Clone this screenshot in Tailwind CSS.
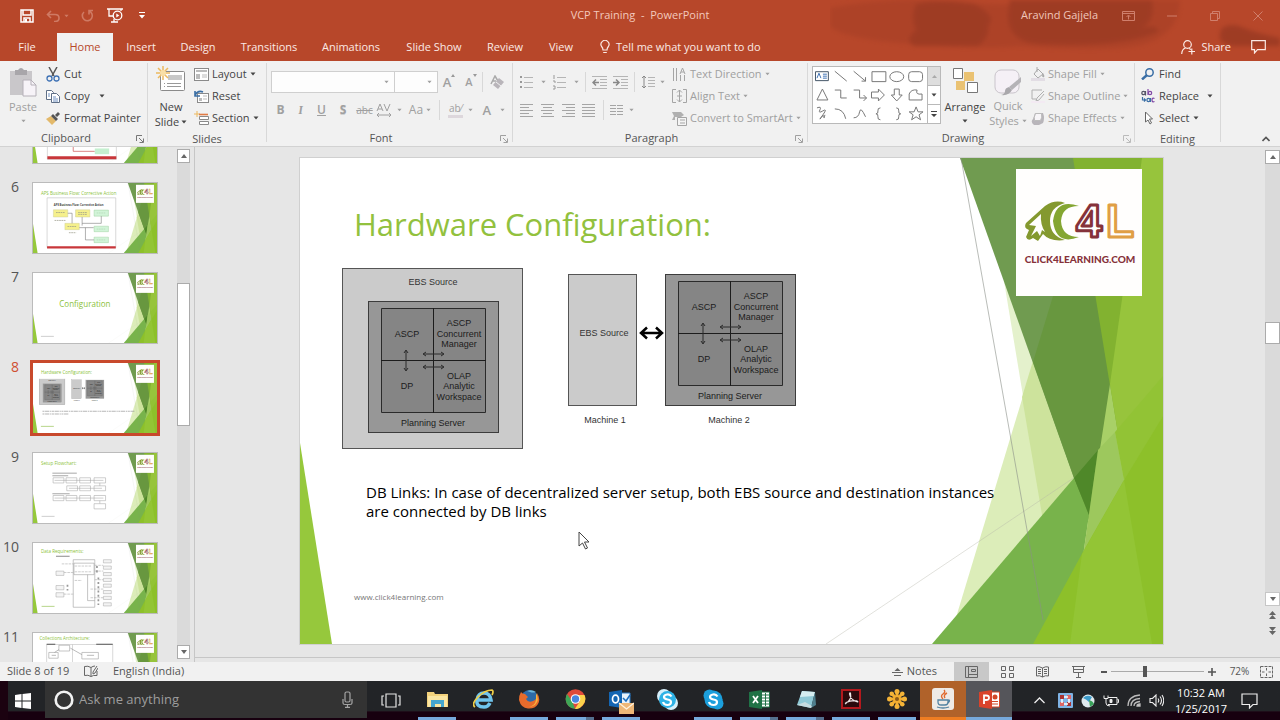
<!DOCTYPE html>
<html lang="en">
<head>
<meta charset="utf-8">
<meta name="viewport" content="width=device-width, initial-scale=1">
<title>VCP Training - PowerPoint</title>
<script src="https://cdn.jsdelivr.net/npm/@tailwindcss/browser@4"></script>
</head>
<body class="h-screen flex flex-col overflow-hidden bg-[#e6e6e6] font-['Open_Sans','Noto_Sans',sans-serif] text-[11px] text-[#444]">

<!-- shared symbols -->
<svg width="0" height="0" class="absolute" aria-hidden="true">
  <defs>
    <symbol id="caret" viewBox="0 0 6 4"><path d="M0.5 0.5h5L3 3.5z" fill="currentColor"/></symbol>
    <symbol id="launch" viewBox="0 0 8 8"><path d="M0.5 6V0.5H6M3 3l4 4M7.5 3.5v4h-4" fill="none" stroke="currentColor"/></symbol>
    <symbol id="logo" viewBox="0 0 126 127">
      <rect width="126" height="127" fill="#fffefd"/>
      <path d="M49 34Q39 30 29 37L10 54Q7 59 13 61L10 68Q12 73 17 69L22 72 27 65Q34 73 49 71Q34 67 34 52Q34 38 49 34z" fill="#84992f"/>
      <path d="M25 45L13 56l7 1-5 10 6-5 3 5 2-6 3 2q-5-8-4-18z" fill="#fffefd"/>
      <path d="M63 37Q40 29 37 52Q40 77 63 68Q46 68 45 52Q46 37 63 37z" fill="#84a632"/>
      <text x="60" y="68" font-family="Liberation Sans" font-weight="700" font-size="47" fill="#fffefd" stroke="#85323a" stroke-width="3" stroke-linejoin="round">4</text>
      <text x="90" y="68" font-family="Liberation Sans" font-weight="700" font-size="46" fill="#fffefd" stroke="#e09f45" stroke-width="3" stroke-linejoin="round">L</text>
      <text x="64" y="94" text-anchor="middle" font-family="Lato" font-weight="900" font-size="10" fill="#86323a">CLICK4LEARNING.COM</text>
    </symbol>
    <symbol id="theme" viewBox="300 158 863 486" preserveAspectRatio="none">
      <rect x="300" y="158" width="863" height="486" fill="#fff"/>
      <path d="M300 443L332 644H300z" fill="#96c83c"/>
      <path d="M1004 281L1064 644H1163V281z" fill="#e4f1cc"/>
      <path d="M1095 158H1163V644H948z" fill="#dcedb9"/>
      <path d="M1022 397L1064 644H1163V158H1095z" fill="#cde39c"/>
      <path d="M826 644L1163 418" stroke="#b4b4a8" stroke-opacity=".4" fill="none"/>
      <path d="M960 158H1163V644H1133z" fill="#709b50"/>
      <path d="M1095 158H1163V644H1133L1033 362z" fill="#68973f"/>
      <path d="M1073 158H1163V644H1152z" fill="#82b230"/>
      <path d="M1110 384L1152 644H1070z" fill="#a8d067"/>
      <path d="M1142 158H1163V644H1152L1110 384z" fill="#97c43c"/>
      <path d="M932 644L1074 478L1089 515L1070 644z" fill="#78b34b"/>
      <path d="M1074 478L1098 450L1089 515z" fill="#4f8829"/>
      <path d="M1098 450L1115 432L1124 480L1084 550z" fill="#9dc85d"/>
      <path d="M1115 432L1163 376V416L1124 480z" fill="#92c335"/>
      <path d="M1033 644L1084 550L1124 480L1163 416V644z" fill="#8dc02a"/>
      <path d="M1082 554L1124 480L1152 644H1070z" fill="#93c535"/>
      <path d="M961 158L1043 620" stroke="#8a8f88" stroke-opacity=".6" fill="none"/>
    </symbol>
    <symbol id="quad" viewBox="0 0 132 132">
      <rect x="0.5" y="0.5" width="130" height="131" fill="#979797" stroke="#3c3c3c"/>
      <path d="M13.500 7.500h104v104h-104z" fill="#858585" stroke="#2a2a2a"/>
      <path d="M65.500 7v105M13 59.500h105" stroke="#1c1c1c" fill="none"/>
      <g stroke="#2a2a2a" fill="none">
        <path d="M38 50v19M36 52l2-3 2 3M36 67l2 3 2-3M56 53h19M58 51l-3 2 3 2M73 51l3 2-3 2M56 66h19M58 64l-3 2 3 2M73 64l3 2-3 2"/>
      </g>
      <g font-family="Liberation Sans" font-size="9" fill="#1c1c1c" text-anchor="middle">
        <text x="39" y="36">ASCP</text><text x="39" y="88">DP</text>
        <text x="91" y="25">ASCP</text><text x="91" y="36">Concurrent</text><text x="91" y="46">Manager</text>
        <text x="91" y="78">OLAP</text><text x="91" y="88">Analytic</text><text x="91" y="99">Workspace</text>
        <text x="65" y="125">Planning Server</text>
      </g>
    </symbol>
    <symbol id="diagram" viewBox="0 0 455 181">
      <rect x="0.500" y="0.500" width="180" height="180" fill="#cbcbcb" stroke="#555"/>
      <text x="91" y="17" font-family="Liberation Sans" font-size="9" fill="#333" text-anchor="middle">EBS Source</text>
      <use href="#quad" x="26" y="33" width="132" height="132"/>
      <rect x="226.500" y="6.500" width="68" height="131" fill="#cbcbcb" stroke="#555"/>
      <text x="262" y="68" font-family="Liberation Sans" font-size="9" fill="#333" text-anchor="middle">EBS Source</text>
      <path d="M300 65h19M305 59.500l-6 5.500 6 5.500M314 59.500l6 5.500-6 5.500" fill="none" stroke="#000" stroke-width="2.500"/>
      <use href="#quad" x="323" y="6" width="132" height="132"/>
      <g font-family="Liberation Sans" font-size="9" fill="#333" text-anchor="middle"><text x="263" y="155">Machine 1</text><text x="387" y="155">Machine 2</text></g>
    </symbol>
  </defs>
</svg>

<header class="relative bg-[#b7472a] text-white shrink-0">
  <svg class="absolute right-0 top-0 w-[450px] h-[61px]" viewBox="0 0 450 61" aria-hidden="true">
    <g fill="#8f3520" opacity=".6" class="blur-[2px]"><path d="M0 8Q60-4 130 2T260 0H350Q350 30 320 42T190 46Q150 50 80 44T0 26z" opacity=".4"/><path d="M86 4Q110-2 144 4Q168 16 158 26Q160 38 148 46H84Q74 40 86 30Q80 16 86 4z"/><path d="M180 0H322Q326 22 310 28Q330 24 328 32Q290 48 210 44Q170 42 180 0z"/><path d="M392 28Q402 22 414 28Q430 34 450 38V46H404Q384 44 392 28z"/></g>
  </svg>
  <div class="relative flex items-center h-[31px]">
    <div class="flex items-center pl-[13px] text-white">
      <button aria-label="Save" class="w-[28px] flex justify-center"><svg width="14" height="14" viewBox="0 0 14 14" fill="none" stroke="currentColor" stroke-width="1.500"><path d="M1 1h12v12H1zM3 1v5h8V1M4 13V9h6v4"/><path d="M5 10h2v3H5z" fill="currentColor" stroke="none"/></svg></button>
      <button aria-label="Undo" class="w-[32px] flex justify-center items-center gap-1 text-[#cf7a64]"><svg width="14" height="12" viewBox="0 0 14 12" fill="none" stroke="currentColor" stroke-width="1.600"><path d="M5 1L1.500 4.500 5 8M2 4.500h7q4 0 4 3.500t-4 3.500H8"/></svg><svg width="5" height="4"><use href="#caret"/></svg></button>
      <button aria-label="Redo" class="w-[28px] flex justify-center text-[#cf7a64]"><svg width="13" height="13" viewBox="0 0 13 13" fill="none" stroke="currentColor" stroke-width="1.600"><path d="M3 3a5 5 0 1 0 5-1M8 5.500V1.500h4"/></svg></button>
      <button aria-label="Start from beginning" class="w-[28px] flex justify-center"><svg width="16" height="15" viewBox="0 0 16 15" fill="none" stroke="currentColor" stroke-width="1.300"><path d="M0 1h16M2 1v7h4M14 1v2M4 14h7M7 11v3"/><circle cx="10.500" cy="7.500" r="4.300"/><path d="M9.300 5.500v4l3-2z" fill="currentColor" stroke="none"/></svg></button>
      <button aria-label="Customize quick access toolbar" class="w-[26px] flex justify-center"><svg width="6" height="7" viewBox="0 0 6 7"><path d="M0 0h6v1H0zM0 3h6L3 6.500z" fill="currentColor"/></svg></button>
    </div>
    <h1 class="absolute inset-x-0 mx-auto w-fit whitespace-pre text-[#f3c9bd]">VCP Training  -  PowerPoint</h1>
    <div class="ml-auto flex items-center text-[#f0c6ba]">
      <span class="mr-[21px]">Aravind Gajjela</span>
      <button aria-label="Ribbon display options" class="w-[18px] mr-[26px] flex justify-center"><svg width="13" height="10" viewBox="0 0 13 10" fill="none" stroke="#d07f6c"><path d="M.5.500h12v9H.500zM.5 2.500h12M6.500 8.500v-4M4.500 6l2-2 2 2"/></svg></button>
      <button aria-label="Minimize" class="w-[18px] mr-[25px] flex justify-center"><svg width="10" height="2"><path d="M0 1h10" stroke="#d07f6c"/></svg></button>
      <button aria-label="Restore" class="w-[18px] mr-[25px] flex justify-center"><svg width="10" height="10" viewBox="0 0 10 10" fill="none" stroke="#d07f6c"><path d="M.5 2.500h7v7h-7zM2.500 2.500v-2h7v7h-2"/></svg></button>
      <button aria-label="Close" class="w-[18px] mr-[13px] flex justify-center"><svg width="10" height="10" viewBox="0 0 10 10" stroke="#d07f6c"><path d="M.5.500l9 9M9.500.500l-9 9"/></svg></button>
    </div>
  </div>
  <nav class="relative flex items-end h-[30px] text-[#fbeae5]" aria-label="Ribbon tabs">
    <button class="w-[57px] h-[28px] pr-[3px]">File</button>
    <button class="w-[56px] h-[28px] bg-[#f1f1f1] text-[#b7472a]">Home</button>
    <button class="w-[56px] h-[28px]">Insert</button>
    <button class="w-[58px] h-[28px]">Design</button>
    <button class="w-[84px] h-[28px]">Transitions</button>
    <button class="w-[80px] h-[28px]">Animations</button>
    <button class="w-[86px] h-[28px]">Slide Show</button>
    <button class="w-[56px] h-[28px]">Review</button>
    <button class="w-[56px] h-[28px]">View</button>
    <button class="h-[28px] pl-[11px] flex items-center gap-[6px] whitespace-nowrap"><svg width="10" height="14" viewBox="0 0 10 14" fill="none" stroke="currentColor" stroke-width="1.200"><path d="M3 10Q3 8 1.600 6.500A4 4 0 1 1 8.400 6.500Q7 8 7 10zM3.200 12.500h3.600"/></svg>Tell me what you want to do</button>
    <button class="ml-auto h-[28px] mr-[20px] flex items-center gap-[6px]"><svg width="14" height="15" viewBox="0 0 14 15" fill="none" stroke="currentColor" stroke-width="1.200"><circle cx="6.500" cy="4.500" r="3.800"/><path d="M.7 14Q1 9 4.500 8M8 8.500l2 1M7.500 11.500H14M10.800 8.500v6"/></svg>Share</button>
    <button aria-label="Comments" class="h-[28px] mr-[14px]"><svg width="15" height="14" viewBox="0 0 15 14" fill="none" stroke="currentColor" stroke-width="1.200"><path d="M.7.700h13.600v9H6.500L3.500 13V9.700H.7z"/></svg></button>
  </nav>
</header>

<section aria-label="Ribbon" class="flex h-[86px] shrink-0 bg-[#f1f1f1] border-b border-[#d2d2d2] pt-[2px]">
  <!-- Clipboard -->
  <div class="w-[148px] shrink-0 border-r border-[#d8d8d8] mb-1 flex flex-col">
    <div class="flex h-[67px] shrink-0">
      <button class="w-[46px] flex flex-col items-center pt-[5px] text-[#a0a0a0]">
        <svg width="28" height="29" viewBox="0 0 28 29"><path d="M1 3h22v24H1z" fill="#c9c7ca"/><path d="M6 2h3Q12-2 15 2h3v5H6z" fill="#a8a6aa"/><path d="M14 12h8l5 5v11H14z" fill="#f7f3f8" stroke="#b5b0b8"/><path d="M22 12v5h5" fill="none" stroke="#b5b0b8"/></svg>
        <span class="leading-[14px] mt-[3px]">Paste</span><svg width="5" height="4" class="mt-[5px]"><use href="#caret"/></svg>
      </button>
      <div class="flex flex-col">
        <button class="h-[22px] flex items-center gap-[4px]"><svg width="14" height="15" viewBox="0 0 14 15" fill="none"><path d="M3 0l5 9M11 0L6 9" stroke="#555" stroke-width="1.500"/><circle cx="3.500" cy="11.500" r="2.500" stroke="#3f72b5" stroke-width="1.300"/><circle cx="10.500" cy="11.500" r="2.500" stroke="#3f72b5" stroke-width="1.300"/></svg>Cut</button>
        <button class="h-[22px] flex items-center gap-[4px]"><svg width="14" height="13" viewBox="0 0 14 13" fill="#fff" stroke="#5f6f86"><path d="M.5.500h5l2 2v7h-7z"/><path d="M5.500 3.500h5l3 3v6h-8z"/><path d="M2 4h2M2 6h2M7 7h3M7 9h5M7 11h5" stroke="#6f8fc0"/></svg>Copy<svg width="6" height="4" class="ml-[5px]"><use href="#caret"/></svg></button>
        <button class="h-[22px] flex items-center gap-[4px] whitespace-nowrap"><svg width="14" height="13" viewBox="0 0 14 13"><path d="M0 7l5-3 5 5-4 4z" fill="#e3b96b"/><path d="M5 4l2-2 5 5-2 2zM9 3l3-3 2 2-3 3z" fill="#555"/></svg>Format Painter</button>
      </div>
    </div>
    <div class="flex items-center h-[17px] shrink-0"><span class="w-[132px] text-center text-[#555]">Clipboard</span><svg width="8" height="8" class="ml-[4px] text-[#777]"><use href="#launch"/></svg></div>
  </div>
  <!-- Slides -->
  <div class="w-[119px] shrink-0 border-r border-[#d8d8d8] mb-1 flex flex-col">
    <div class="flex h-[67px] shrink-0">
      <button class="w-[46px] flex flex-col items-center pt-[3px] leading-[15px]">
        <svg width="30" height="27" viewBox="0 0 30 27"><rect x="4.500" y="5.500" width="24" height="19" rx="1" fill="#fff" stroke="#8a8a8a"/><path d="M12 9h14v5H12z" fill="#c8c8c8"/><path d="M8 17.500h1M11 17.500h14M8 20.500h1M11 20.500h14" stroke="#999"/><path d="M7 0v14M0 7h14M2 2l10 10M12 2L2 12" stroke="#ecb95f" stroke-width="1.500"/><circle cx="7" cy="7" r="3" fill="#f9dfa6"/></svg>
        <span class="mt-[6px]">New</span><span class="flex items-center gap-[2px]">Slide<svg width="6" height="4"><use href="#caret"/></svg></span>
      </button>
      <div class="flex flex-col">
        <button class="h-[22px] flex items-center gap-[3px]"><svg width="15" height="13" viewBox="0 0 15 13"><rect x=".5" y=".5" width="14" height="12" fill="#fff" stroke="#8a8a8a"/><path d="M2 2h11v2H2zM2 6h4v5H2z" fill="#bbb"/><path d="M8 7h5M8 9h5" stroke="#bbb"/></svg>Layout<svg width="6" height="4"><use href="#caret"/></svg></button>
        <button class="h-[22px] flex items-center gap-[3px]"><svg width="15" height="13" viewBox="0 0 15 13"><rect x="3.500" y="3.500" width="11" height="9" fill="#fff" stroke="#8a8a8a"/><path d="M5 8h3v3H5z" fill="#bbb"/><path d="M9 6h4M9 9h4" stroke="#bbb"/><path d="M1 1v5h5M1 5q3-5 8-3" fill="none" stroke="#3a6ea5" stroke-width="1.600"/></svg>Reset</button>
        <button class="h-[22px] flex items-center gap-[3px]"><svg width="15" height="14" viewBox="0 0 15 14"><path d="M3 0v6M0 3h6" stroke="#ecb95f"/><path d="M5 3.500h9" stroke="#e07b45" stroke-width="1.600"/><path d="M5.500 5.500h9v3h-9zM5.500 10.500h9v3h-9z" fill="#fff" stroke="#8a8a8a"/></svg>Section<svg width="6" height="4"><use href="#caret"/></svg></button>
      </div>
    </div>
    <div class="h-[17px] shrink-0 leading-[17px] text-center text-[#555]">Slides</div>
  </div>
  <!-- Font -->
  <div class="w-[246px] shrink-0 border-r border-[#d8d8d8] mb-1 flex flex-col text-[#a0a0a0]">
    <div class="h-[67px] shrink-0 pl-[4px] pt-[8px]">
      <div class="flex items-center h-[22px]">
        <label class="flex items-center w-[124px] h-[22px] border border-[#cfcfcf] bg-[#fdfdfd]"><input aria-label="Font" class="w-[112px] h-full px-1 outline-none"><svg width="5" height="4"><use href="#caret"/></svg></label>
        <label class="flex items-center w-[43px] h-[22px] border border-l-0 border-[#cfcfcf] bg-[#fdfdfd]"><input aria-label="Font size" class="w-[32px] h-full px-1 outline-none"><svg width="5" height="4"><use href="#caret"/></svg></label>
        <button aria-label="Increase font size" class="w-[22px] flex justify-center items-start font-semibold text-[13px] leading-[16px]">A<svg width="4" height="3" viewBox="0 0 4 3"><path d="M0 3l2-3 2 3z" fill="#999"/></svg></button>
        <button aria-label="Decrease font size" class="w-[22px] flex justify-center items-start font-semibold text-[11px] leading-[16px]">A<svg width="4" height="3" viewBox="0 0 4 3"><path d="M0 0l2 3 2-3z" fill="#999"/></svg></button>
        <span class="w-px h-[20px] bg-[#d8d8d8]"></span>
        <button aria-label="Clear formatting" class="w-[27px] flex justify-center"><svg width="14" height="15" viewBox="0 0 14 15"><path d="M1 9l4-8 3 5M2 6h4" fill="none" stroke="#aaa" stroke-width="1.500"/><path d="M9 3l5 4-6 7-5-4z" fill="#b9b5ba"/><path d="M6 7l5 4" stroke="#f1f1f1"/></svg></button>
      </div>
      <div class="flex items-center h-[20px] mt-[7px] text-[12px] leading-[16px]">
        <button aria-label="Bold" class="w-[19px] font-bold">B</button>
        <button aria-label="Italic" class="w-[21px] italic font-serif font-semibold">I</button>
        <button aria-label="Underline" class="w-[21px] underline font-semibold">U</button>
        <button aria-label="Shadow" class="w-[22px] font-bold text-shadow-2xs">S</button>
        <button aria-label="Strikethrough" class="w-[21px] line-through text-[10px]">abc</button>
        <button aria-label="Character spacing" class="w-[31px] flex items-center gap-[3px]"><svg width="19" height="15" viewBox="0 0 19 15" fill="none" stroke="#a0a0a0"><path d="M2 8l3-7 3 7M3 6h4M9 1l3 7 3-7M2 12h14M4 10l-2 2 2 2M14 10l2 2-2 2"/></svg><svg width="5" height="4"><use href="#caret"/></svg></button>
        <button aria-label="Change case" class="w-[28px] flex items-center justify-center gap-[3px]">Aa<svg width="5" height="4"><use href="#caret"/></svg></button>
        <span class="w-px h-[20px] bg-[#d8d8d8] ml-[5px]"></span>
        <button aria-label="Highlight" class="w-[33px] flex items-center justify-end gap-[5px]"><span class="flex flex-col text-[10px] leading-[10px]"><span>ab⁄</span><span class="h-[3px] w-[15px] mt-[2px] bg-[#ddd7dc]"></span></span><svg width="5" height="4"><use href="#caret"/></svg></button>
        <button aria-label="Font color" class="w-[32px] flex items-center justify-end gap-[9px] font-semibold text-[13px]">A<svg width="5" height="4"><use href="#caret"/></svg></button>
      </div>
    </div>
    <div class="flex items-center h-[17px] shrink-0"><span class="w-[228px] text-center text-[#555]">Font</span><svg width="8" height="8" class="ml-[5px]"><use href="#launch"/></svg></div>
  </div>
  <!-- Paragraph -->
  <div class="w-[295px] shrink-0 border-r border-[#d8d8d8] mb-1 flex flex-col text-[#a0a0a0]">
    <div class="flex h-[67px] shrink-0">
      <div class="w-[159px] pt-[8px] pl-[7px]">
        <div class="flex items-center h-[22px]">
          <button aria-label="Bullets" class="w-[33px] flex items-center gap-[7px]"><svg width="14" height="14" viewBox="0 0 14 14"><path d="M0 1h2v2H0zM0 6h2v2H0zM0 11h2v2H0z" fill="#999"/><path d="M4 2.500h9M4 7.500h9M4 12.500h9" stroke="#b5b5b5"/></svg><svg width="5" height="4"><use href="#caret"/></svg></button>
          <button aria-label="Numbering" class="w-[32px] flex items-center gap-[7px]"><svg width="14" height="15" viewBox="0 0 14 15"><path d="M1 0v4M0 6h2v2M0 11h2v3H0" stroke="#999" fill="none"/><path d="M4 2.500h9M4 7.500h9M4 12.500h9" stroke="#b5b5b5"/></svg><svg width="5" height="4"><use href="#caret"/></svg></button>
          <span class="w-px h-[20px] bg-[#d8d8d8]"></span>
          <button aria-label="Decrease indent" class="w-[21px] ml-[3px] flex justify-center"><svg width="15" height="13" viewBox="0 0 15 13"><path d="M0 .5h15M8 3.500h7M8 6.500h7M8 9.500h7M0 12.500h15" stroke="#b5b5b5"/><path d="M7 6.500H1M4 3.500l-3 3 3 3" fill="none" stroke="#888" stroke-width="1.500"/></svg></button>
          <button aria-label="Increase indent" class="w-[21px] flex justify-center"><svg width="15" height="13" viewBox="0 0 15 13"><path d="M0 .5h15M8 3.500h7M8 6.500h7M8 9.500h7M0 12.500h15" stroke="#b5b5b5"/><path d="M0 6.500h6M3 3.500l3 3-3 3" fill="none" stroke="#888" stroke-width="1.500"/></svg></button>
          <span class="w-px h-[20px] bg-[#d8d8d8] ml-[3px]"></span>
          <button aria-label="Line spacing" class="w-[30px] flex items-center justify-end gap-[5px]"><svg width="14" height="14" viewBox="0 0 14 14"><path d="M3 1v12M1 3l2-2 2 2M1 11l2 2 2-2" fill="none" stroke="#888"/><path d="M7 2.500h7M7 5.500h7M7 8.500h7M7 11.500h7" stroke="#b5b5b5"/></svg><svg width="5" height="4"><use href="#caret"/></svg></button>
        </div>
        <div class="flex items-center h-[20px] mt-[7px]">
          <button aria-label="Align left" class="w-[21px]"><svg width="13" height="13" viewBox="0 0 13 13" stroke="#a5a5a5"><path d="M0 .5h13M0 3.500h9M0 6.500h13M0 9.500h9M0 12.500h13"/></svg></button>
          <button aria-label="Center" class="w-[21px]"><svg width="13" height="13" viewBox="0 0 13 13" stroke="#a5a5a5"><path d="M0 .5h13M2 3.500h9M0 6.500h13M2 9.500h9M0 12.500h13"/></svg></button>
          <button aria-label="Align right" class="w-[20px]"><svg width="13" height="13" viewBox="0 0 13 13" stroke="#a5a5a5"><path d="M0 .5h13M4 3.500h9M0 6.500h13M4 9.500h9M0 12.500h13"/></svg></button>
          <button aria-label="Justify" class="w-[21px]"><svg width="13" height="13" viewBox="0 0 13 13" stroke="#a5a5a5"><path d="M0 .5h13M0 3.500h13M0 6.500h13M0 9.500h13M0 12.500h13"/></svg></button>
          <span class="w-px h-[20px] bg-[#d8d8d8]"></span>
          <button aria-label="Columns" class="w-[30px] flex items-center justify-end gap-[6px]"><svg width="13" height="11" viewBox="0 0 13 11" stroke="#a5a5a5"><path d="M0 .5h6M7 .5h6M0 3.500h6M7 3.500h6M0 6.500h6M7 6.500h6M0 9.500h6M7 9.500h6"/></svg><svg width="5" height="4"><use href="#caret"/></svg></button>
        </div>
      </div>
      <div class="flex flex-col whitespace-nowrap">
        <button class="h-[22px] flex items-center gap-[3px]"><svg width="15" height="15" viewBox="0 0 15 15" fill="none" stroke="#a5a5a5"><path d="M1.500 1v13M4.500 1v13M8.500 14V8M12.500 14V8M8 7l2.500-6L13 7M9 5h3"/></svg>Text Direction<svg width="5" height="4"><use href="#caret"/></svg></button>
        <button class="h-[22px] flex items-center gap-[3px]"><svg width="15" height="14" viewBox="0 0 15 14" fill="none" stroke="#a5a5a5"><path d="M4 .5H.5v13H4M11 .5h3.500v13H11M7.500 1v12M5 3.500L7.500 1 10 3.500M5 10.500l2.500 2.500 2.500-2.500M5 7h5"/></svg>Align Text<svg width="5" height="4"><use href="#caret"/></svg></button>
        <button class="h-[22px] flex items-center gap-[3px]"><svg width="15" height="15" viewBox="0 0 15 15"><path d="M0 1h9l3 3-3 2H3v3H0l2-4z" fill="#b0b0b0"/><path d="M5.500 6.500h9v8h-9z" fill="#f4f4f4" stroke="#a5a5a5"/><path d="M8 9h5M8 12h5" stroke="#a5a5a5"/></svg>Convert to SmartArt<svg width="5" height="4"><use href="#caret"/></svg></button>
      </div>
    </div>
    <div class="flex items-center h-[17px] shrink-0"><span class="w-[277px] text-center text-[#555]">Paragraph</span><svg width="8" height="8" class="ml-[5px]"><use href="#launch"/></svg></div>
  </div>
  <!-- Drawing -->
  <div class="w-[327px] shrink-0 border-r border-[#d8d8d8] mb-1 flex flex-col">
    <div class="flex h-[67px] shrink-0">
      <div class="mt-[3px] ml-[4px] w-[129px] h-[58px] border border-[#b9b9b9] bg-white flex">
        <svg class="flex-1" viewBox="0 0 115 56" fill="none" stroke="#777" role="img" aria-label="Shape gallery">
          <path d="M2.500 4.500h13v9h-13z" stroke="#456"/><path d="M4 11l2-5 2 5M10 7h4M10 9h4M10 11h4" stroke="#3f72b5"/>
          <path d="M22 4l12 10M41 4l12 10M53 10v4h-4M59.500 4.500h14v10h-14z"/><ellipse cx="84.500" cy="9.500" rx="7" ry="5"/><rect x="96.500" y="4.500" width="14" height="10" rx="3"/>
          <path d="M9.500 22L4 33h11zM22 23h6v8h6M41 23h6v8h7M51 28l3 3-3 3M59 25h7v-3l6 6-6 6v-3h-7zM82 22h5v6h3l-5.500 6-5.500-6h3zM97 33V27q2-5 8-4-2 5 5 4v6z"/>
          <path d="M4 41q5-2 3 2t3 1 0 4-2 3 3-1 1-2M22 42q9 0 11 10M41 51q5 0 6-6t6 5M68 41q-3 0-2.500 3t-2 3q2.500 0 2 3t2.500 3M84 41q3 0 2.500 3t2 3q-2.500 0-2 3t-2.500 3M104 40l2 5h5l-4 3 1.500 5-4.500-3-4.500 3 1.500-5-4-3h5z"/>
        </svg>
        <div class="w-[13px] flex flex-col border-l border-[#b9b9b9]">
          <button aria-label="Scroll up" class="flex-1 bg-[#dedede] flex items-center justify-center"><svg width="5" height="4" viewBox="0 0 5 4"><path d="M0 4l2.500-3L5 4z" fill="#aaa"/></svg></button>
          <button aria-label="Scroll down" class="flex-1 border-y border-[#b9b9b9] flex items-center justify-center"><svg width="6" height="4"><use href="#caret"/></svg></button>
          <button aria-label="More shapes" class="flex-1 flex items-center justify-center"><svg width="6" height="7" viewBox="0 0 6 7"><path d="M0 0h6v1H0zM0 3h6L3 6z" fill="#444"/></svg></button>
        </div>
      </div>
      <button class="w-[46px] ml-[1px] flex flex-col items-center pt-[5px]"><svg width="26" height="26" viewBox="0 0 26 26"><path d="M12 4h10v9H12zM4 13h9v9H4z" fill="#eac272"/><path d="M1.500.500h9v10h-9zM15.500 14.500h10v10h-10z" fill="#fff" stroke="#777"/></svg><span class="leading-[14px] mt-[6px]">Arrange</span><svg width="6" height="4" class="mt-[5px]"><use href="#caret"/></svg></button>
      <button class="w-[40px] flex flex-col items-center pt-[6px] leading-[15px] text-[#a0a0a0]"><svg width="28" height="27" viewBox="0 0 28 27"><rect x="1" y="1" width="24" height="23" rx="6" fill="#f5f0f6" stroke="#c9c4cb"/><path d="M27 8v5l-9 8-3-3z" fill="#b5b3b7"/><path d="M15 18l3 3q-3 6-11 5 4-1 4-4t4-4z" fill="#aaa8ac"/></svg><span class="mt-[2px]">Quick</span><span class="flex items-center gap-[3px]">Styles<svg width="5" height="4"><use href="#caret"/></svg></span></button>
      <div class="flex flex-col whitespace-nowrap text-[#a0a0a0] ml-[3px]">
        <button class="h-[22px] flex items-center gap-[3px]"><svg width="14" height="14" viewBox="0 0 14 14"><path d="M0 11h14v3H0z" fill="#e2dde4"/><path d="M7 2l5 5-5 4-4-4zM6 0v5" fill="none" stroke="#aaa"/><path d="M12 6q2 3 1 4t-2-1z" fill="#aaa"/></svg>Shape Fill<svg width="5" height="4"><use href="#caret"/></svg></button>
        <button class="h-[22px] flex items-center gap-[3px]"><svg width="14" height="14" viewBox="0 0 14 14"><path d="M11 1H1v9h4M13 2L6 9l-1 3 3-1 5-6" fill="none" stroke="#b0b0b0"/><path d="M0 12h14v2H0z" fill="#f3eaf3"/></svg>Shape Outline<svg width="5" height="4"><use href="#caret"/></svg></button>
        <button class="h-[22px] flex items-center gap-[3px]"><svg width="14" height="13" viewBox="0 0 14 13"><path d="M4 1h8q2 5 0 10l-4 2H3q-4-3-1-6z" fill="#b8b5ba"/><path d="M4.500 1.500h6q1 4-1 7h-6q-1-3 1-7z" fill="#f7f5f8" stroke="#bbb"/></svg>Shape Effects<svg width="5" height="4"><use href="#caret"/></svg></button>
      </div>
    </div>
    <div class="flex items-center h-[17px] shrink-0"><span class="w-[310px] text-center text-[#555]">Drawing</span><svg width="8" height="8" class="ml-[5px] text-[#bbb]"><use href="#launch"/></svg></div>
  </div>
  <!-- Editing -->
  <div class="w-[86px] shrink-0 border-r border-[#d8d8d8] mb-1 flex flex-col">
    <div class="flex flex-col h-[67px] shrink-0 pl-[6px]">
      <button class="h-[22px] flex items-center gap-[4px]"><svg width="14" height="12" viewBox="0 0 14 12" fill="none" stroke="#3a6ea5"><circle cx="8.500" cy="4.500" r="3.700" stroke-width="1.500"/><path d="M6 7l-5 4.500" stroke-width="2.400"/></svg>Find</button>
      <button class="h-[22px] flex items-center gap-[4px]"><svg width="14" height="14" viewBox="0 0 14 14" fill="none" stroke-width="1.200"><g stroke="#556"><circle cx="2.500" cy="4" r="1.700"/><path d="M4.500 2v4.500"/></g><g stroke="#8148a5"><circle cx="9" cy="4" r="1.700"/><path d="M7 0v6"/></g><path d="M1.500 8v3h3M3 9.500L4.500 11 3 12.500" stroke="#3a6ea5"/><g stroke="#3a6ea5"><circle cx="7.500" cy="11" r="1.600"/><path d="M9.500 9v4"/></g><path d="M13.500 9.500q-2.500-1-2.500 1.500t2.500 1.500" stroke="#8148a5"/></svg>Replace<svg width="6" height="4" class="ml-[4px]"><use href="#caret"/></svg></button>
      <button class="h-[22px] flex items-center gap-[4px]"><svg width="14" height="14" viewBox="0 0 14 14"><path d="M4.500 1v10l2.500-2 2 4 1.500-1-2-4h3z" fill="#fff" stroke="#666"/></svg>Select<svg width="6" height="4"><use href="#caret"/></svg></button>
    </div>
    <div class="h-[17px] shrink-0 leading-[17px] text-center text-[#555]">Editing</div>
  </div>
  <button aria-label="Collapse ribbon" class="ml-auto self-end mb-[4px] mr-[10px]"><svg width="8" height="6" viewBox="0 0 8 6"><path d="M.5 5L4 1.500 7.500 5" fill="none" stroke="#555" stroke-width="1.600"/></svg></button>
</section>

<main class="flex flex-1 min-h-0">
  <!-- thumbnails -->
  <aside aria-label="Slides" class="w-[195px] shrink-0 flex border-r border-[#c6c6c6]">
    <ol class="w-[177px] overflow-hidden flex flex-col gap-[18px] text-[14px] leading-[10px] text-[#555]">
      <li class="flex h-[17px] shrink-0 pl-[32px] items-end overflow-hidden">
        <svg class="w-[126px] h-[17px] border border-t-0 border-[#bbb]" viewBox="0 375 863 111" preserveAspectRatio="none"><use href="#theme" width="863" height="486"/><path d="M100 370v90h480v-90" fill="#fff" stroke="#ccc" stroke-width="5"/><path d="M280 360v45h150" fill="none" stroke="#c55" stroke-width="5"/><path d="M430 385h100v40H430z" fill="#c5f0d0"/><path d="M100 440h480v20H100z" fill="#c8363a"/></svg>
      </li>
      <li class="flex h-[72px] shrink-0"><span class="w-[19px] mr-[13px] text-right">6</span>
        <svg class="w-[126px] h-[72px] border border-[#bbb]" viewBox="0 0 863 486" preserveAspectRatio="none"><use href="#theme" width="863" height="486"/><use href="#logo" x="716" y="11" width="126" height="127"/><text x="55" y="82" font-size="31" fill="#8bbf3a">APS Business Flow: Corrective Action</text><path d="M98 103h478v345H98z" fill="#fff" stroke="#bbb" stroke-width="4"/><path d="M98 440h478v14H98z" fill="#c8363a"/><text x="145" y="157" font-size="19" font-weight="700" fill="#444">APS Business Flow: Corrective Action</text><path d="M142 186h100v50H142zM296 186h100v50H296zM222 280h100v44H222z" fill="#f5f08c" stroke="#cc9" stroke-width="3"/><path d="M160 205h64M314 205h64M314 218h64M240 302h64M443 208h64M443 320h64M443 395h64M150 260h80M250 345h50" stroke="#998" stroke-width="5" stroke-dasharray="12 4"/><path d="M425 188h100v42H425zM425 300h100v38H425zM425 376h100v38H425z" fill="#bdf0c8" fill-opacity=".7" stroke="#9c9" stroke-width="3"/><path d="M242 210h30v70M342 236v60M322 310h100M365 310v85h60M475 230v50H342" fill="none" stroke="#777" stroke-width="4"/></svg></li>
      <li class="flex h-[72px] shrink-0"><span class="w-[19px] mr-[13px] text-right">7</span>
        <svg class="w-[126px] h-[72px] border border-[#bbb]" viewBox="0 0 863 486" preserveAspectRatio="none"><use href="#theme" width="863" height="486"/><use href="#logo" x="716" y="11" width="126" height="127"/><text x="183" y="237" font-size="56" fill="#8bbf3a">Configuration</text><path d="M55 440h90" stroke="#bbb" stroke-width="5"/></svg></li>
      <li class="flex h-[72px] shrink-0"><span class="w-[19px] mr-[13px] text-right text-[#cf4f32]">8</span>
        <svg class="w-[126px] h-[72px] outline-2 outline-[#c8492c] border border-[#c8492c]" viewBox="0 0 863 486" preserveAspectRatio="none"><use href="#theme" width="863" height="486"/><use href="#logo" x="716" y="11" width="126" height="127"/><text x="55" y="78" font-size="31" fill="#8bbf3a">Hardware Configuration:</text><use href="#diagram" x="42" y="110" width="455" height="181"/><path d="M66 335h640M66 354h185" stroke="#999" stroke-width="5" stroke-dasharray="14 4 30 5 9 4"/><path d="M55 440h90" stroke="#9bc45a" stroke-width="5"/></svg></li>
      <li class="flex h-[72px] shrink-0"><span class="w-[19px] mr-[13px] text-right">9</span>
        <svg class="w-[126px] h-[72px] border border-[#bbb]" viewBox="0 0 863 486" preserveAspectRatio="none"><use href="#theme" width="863" height="486"/><use href="#logo" x="716" y="11" width="126" height="127"/><text x="55" y="84" font-size="32" fill="#8bbf3a">Setup Flowchart:</text><path d="M135 140h170M135 158h110M135 283h120" stroke="#999" stroke-width="6"/><path d="M140 172h75v36h-75zM230 172h75v36h-75zM325 172h75v36h-75zM425 172h80v36h-80zM425 228h80v34h-80zM325 228h75v34h-75zM235 228h75v34h-75zM140 295h75v36h-75zM230 295h75v36h-75zM325 295h75v36h-75zM425 295h80v36h-80zM425 352h80v36h-80z" fill="#fff" stroke="#aaa" stroke-width="4"/><path d="M150 190h340M150 313h340M465 208v20M465 331v20M250 245h230" stroke="#aaa" stroke-width="4"/><path d="M60 440h90" stroke="#bbb" stroke-width="5"/></svg></li>
      <li class="flex h-[72px] shrink-0"><span class="w-[19px] mr-[13px] text-right">10</span>
        <svg class="w-[126px] h-[72px] border border-[#bbb]" viewBox="0 0 863 486" preserveAspectRatio="none"><use href="#theme" width="863" height="486"/><use href="#logo" x="716" y="11" width="126" height="127"/><text x="55" y="70" font-size="32" fill="#8bbf3a">Data Requirements:</text><path d="M160 92h95" stroke="#777" stroke-width="6"/><path d="M280 116h150v330H280zM285 140h140v80H285zM380 220v180h50" fill="none" stroke="#999" stroke-width="4"/><path d="M490 116h55v22h-55zM490 160h55v22h-55zM490 205h55v22h-55zM490 245h55v22h-55zM490 285h55v22h-55zM490 330h55v22h-55zM490 370h55v22h-55zM490 415h55v22h-55zM160 195h55v30h-55zM160 295h55v30h-55zM160 345h55v30h-55z" fill="#f4f4f4" stroke="#999" stroke-width="3"/><path d="M430 155h60M430 195h60M430 255h60M400 320h90M400 380h90M215 205h65M200 145h80M215 355h65M290 160h120M290 200h120M290 260h50" stroke="#aaa" stroke-width="4" stroke-dasharray="18 6"/><path d="M445 160v60M455 240v190M240 290v40" stroke="#999" stroke-width="12" stroke-dasharray="14 16"/><path d="M60 440h90" stroke="#9bc45a" stroke-width="5"/></svg></li>
      <li class="flex h-[72px] shrink-0"><span class="w-[19px] mr-[13px] text-right">11</span>
        <svg class="w-[126px] h-[72px] border border-[#bbb]" viewBox="0 0 863 486" preserveAspectRatio="none"><use href="#theme" width="863" height="486"/><use href="#logo" x="716" y="11" width="126" height="127"/><text x="45" y="48" font-size="31" fill="#8bbf3a">Collections Architecture:</text><path d="M95 80h460v360H95zM275 80v360" fill="#fff" stroke="#bbb" stroke-width="4"/><path d="M95 78h60M440 78h115" stroke="#555" stroke-width="7"/><path d="M180 85h75v40h-75zM110 135h65v40h-65zM340 135h115v45H340z" fill="#fff" stroke="#999" stroke-width="4"/><path d="M130 155h30M375 155h50M260 105l80 45M180 115l-30 20" stroke="#888" stroke-width="4"/></svg></li>
    </ol>
    <div class="w-[13px] flex flex-col bg-[#dadada] mt-[2px] mb-[3px]" aria-hidden="true">
      <div class="h-[14px] bg-white border border-[#ababab] flex items-center justify-center"><svg width="6" height="4" viewBox="0 0 6 4"><path d="M0 4l3-4 3 4z" fill="#666"/></svg></div>
      <div class="flex-1 pt-[120px]"><div class="h-[143px] bg-white border border-[#ababab]"></div></div>
      <div class="h-[14px] bg-white border border-[#ababab] flex items-center justify-center"><svg width="6" height="4" viewBox="0 0 6 4"><path d="M0 0l3 4 3-4z" fill="#666"/></svg></div>
    </div>
  </aside>

  <!-- slide editor -->
  <div class="flex-1 min-w-0 flex mb-[4px] border-b border-[#c6c6c6]">
    <div class="flex-1 min-w-0 flex justify-center items-start pt-[11px] pl-[3px]">
      <article class="relative w-full max-w-[863px] aspect-[863/486] outline outline-[#d0d0d0] text-black">
        <svg class="absolute inset-0 w-full h-full" aria-hidden="true"><use href="#theme" width="100%" height="100%"/></svg>
        <svg class="absolute right-[21px] top-[11px]" width="126" height="127" role="img" aria-label="Click4Learning logo"><use href="#logo"/></svg>
        <div class="relative pt-[46px] pl-[42px]">
          <h2 class="pl-[12px] font-medium text-[31px] leading-[40px] text-[#92c13e]">Hardware Configuration:</h2>
          <svg class="mt-[24px]" width="455" height="181" role="img" aria-label="Centralized and decentralized server layouts"><use href="#diagram"/></svg>
          <p class="mt-[34px] ml-[24px] font-medium text-[15px] leading-[19px] whitespace-nowrap">DB Links: In case of decentralized server setup, both EBS source and destination instances<br>are connected by DB links</p>
          <p class="mt-[70px] ml-[12px] text-[8px] leading-[12px] text-[#777]">www.click4learning.com</p>
        </div>
        <svg class="absolute left-[278px] top-[373px]" width="12" height="19" viewBox="0 0 12 19" aria-hidden="true"><path d="M1 1v14l3.500-3 3 6 2-1-3-6H11z" fill="#fff" stroke="#444"/></svg>
      </article>
    </div>
    <div class="w-[15px] shrink-0 flex flex-col mt-[3px] pb-[21px]" aria-hidden="true">
      <div class="h-[14px] bg-white border border-[#ababab] flex items-center justify-center"><svg width="6" height="4" viewBox="0 0 6 4"><path d="M0 4l3-4 3 4z" fill="#666"/></svg></div>
      <div class="flex-1 bg-[#dadada] pt-[158px]"><div class="h-[22px] bg-white border border-[#ababab]"></div></div>
      <div class="h-[14px] bg-white border border-[#c6c6c6] flex items-center justify-center"><svg width="6" height="4" viewBox="0 0 6 4"><path d="M0 0l3 4 3-4z" fill="#666"/></svg></div>
      <svg class="mx-auto mt-[5px]" width="7" height="9" viewBox="0 0 7 9"><path d="M0 4l3.500-4L7 4zM0 8l3.500-4L7 8z" fill="#666"/></svg>
      <svg class="mx-auto mt-[7px]" width="7" height="9" viewBox="0 0 7 9"><path d="M0 0l3.500 4L7 0zM0 4l3.500 4L7 4z" fill="#666"/></svg>
    </div>
  </div>
</main>

<footer class="h-[19px] shrink-0 flex items-center bg-[#f1f1f1] text-[#555] whitespace-nowrap">
  <span class="ml-[7px] w-[77px]">Slide 8 of 19</span>
  <button aria-label="Spelling" class="w-[29px]"><svg width="14" height="13" viewBox="0 0 14 13" fill="none" stroke="#666"><path d="M7 2.500Q4 .5.500 1.500v9q3.500-1 6.500 1v-9Q9 1 11 1M7 11.500q2-1.500 6-1V6M13 1L9 7v2l2-1 3-5"/></svg></button>
  <span>English (India)</span>
  <div class="ml-auto flex items-center h-full">
    <button class="flex items-center gap-[4px] mr-[17px]"><svg width="11" height="10" viewBox="0 0 11 10"><path d="M0 5.500h11M2 8.500h7" stroke="#666"/><path d="M2.500 4l3-3 3 3z" fill="#666"/></svg>Notes</button>
    <button aria-label="Normal view" class="w-[35px] h-full bg-[#c8c8c8] flex items-center justify-center"><svg width="13" height="12" viewBox="0 0 13 12" fill="none" stroke="#666"><path d="M.5.500h12v11H.500zM3.500.500v11M3.500 8.500h9M6.500 3.500h4v2h-4z"/></svg></button>
    <button aria-label="Slide sorter" class="w-[36px] flex justify-center"><svg width="13" height="12" viewBox="0 0 13 12" fill="none" stroke="#666"><path d="M.5.500h4v4h-4zM8.500.500h4v4h-4zM.5 7.500h4v4h-4zM8.500 7.500h4v4h-4z"/></svg></button>
    <button aria-label="Reading view" class="w-[35px] flex justify-center"><svg width="13" height="12" viewBox="0 0 13 12" fill="none" stroke="#666"><path d="M6.500 2Q3 0 .5 1v9q3-1 6 1 3-2 6-1V1Q10 0 6.500 2zv9M2 3.500h3M2 5.500h3M2 7.500h3M8 3.500h3M8 5.500h3M8 7.500h3"/></svg></button>
    <button aria-label="Slide show" class="w-[36px] flex justify-center"><svg width="13" height="12" viewBox="0 0 13 12" fill="none" stroke="#666"><path d="M0 .5h13M1.500.500v6h10v-6M6.500 6.500v5M4 11.500h5M1.500 3.500h10"/></svg></button>
    <button aria-label="Zoom out" class="w-[15px] flex justify-center"><svg width="6" height="2"><path d="M0 1h6" stroke="#555" stroke-width="2"/></svg></button>
    <input type="range" aria-label="Zoom" min="10" max="190" value="74" class="w-[93px] h-[12px] appearance-none bg-transparent [&::-webkit-slider-runnable-track]:h-px [&::-webkit-slider-runnable-track]:bg-[#aaa] [&::-webkit-slider-thumb]:appearance-none [&::-webkit-slider-thumb]:w-[4px] [&::-webkit-slider-thumb]:h-[11px] [&::-webkit-slider-thumb]:-mt-[5px] [&::-webkit-slider-thumb]:bg-[#555]">
    <button aria-label="Zoom in" class="w-[15px] flex justify-center"><svg width="8" height="8" viewBox="0 0 8 8"><path d="M0 4h8M4 0v8" stroke="#555" stroke-width="1.600"/></svg></button>
    <span class="w-[41px] text-center text-[10px]">72%</span>
    <button aria-label="Fit slide to window" class="mr-[7px]"><svg width="13" height="12" viewBox="0 0 13 12" fill="none" stroke="#666"><path d="M.5.500h12v11H.500z" stroke-dasharray="3 1"/><path d="M6.500 2v2.500M6.500 10V7.500M2 6h2.500M11 6H8.500"/></svg></button>
  </div>
</footer>

<nav aria-label="Taskbar" class="h-[39px] shrink-0 flex bg-linear-to-b from-[#222427] from-76% to-[#17000f] to-80% text-white">
  <button aria-label="Start" class="w-[45px] border-l-8 border-[#1b0210] flex items-center justify-center pr-[8px]"><svg width="16" height="16" viewBox="0 0 16 16" fill="#fff"><path d="M0 2l6.500-1v6.500H0zM7.500 1L16 0v7.500H7.500zM0 8.500h6.500V15L0 14zM7.500 8.500H16V16l-8.500-1z"/></svg></button>
  <div class="w-[322px] flex items-center bg-[#333] pl-[9px] pr-[14px] mb-[2px]">
    <svg width="20" height="20" viewBox="0 0 20 20"><circle cx="10" cy="10" r="8.300" fill="none" stroke="#f2f2f2" stroke-width="2.600"/></svg>
    <input type="text" aria-label="Ask me anything" placeholder="Ask me anything" class="flex-1 min-w-0 bg-transparent outline-none ml-[5px] text-[13px] placeholder:text-[#9d9d9d]">
    <svg width="11" height="17" viewBox="0 0 11 17" fill="none" stroke="#a5a5a5" stroke-width="1.200"><rect x="3" y="1" width="5" height="10" rx="1.500"/><path d="M1 8v4q0 1.500 2 1.500h5q2 0 2-1.500V8M5.500 13.500V16M3 16.400h5"/></svg>
  </div>
  <button aria-label="Task view" class="w-[47px] flex items-center justify-center"><svg width="20" height="15" viewBox="0 0 20 15" fill="none" stroke="#e5e5e5" stroke-width="1.200"><path d="M5 1h10v13H5zM3 3H1v9h2M17 3h2v9h-2"/></svg></button>
  <button aria-label="File Explorer" class="w-[46px] flex flex-col items-center"><span class="flex-1 flex items-center"><svg width="21" height="18" viewBox="0 0 21 18"><path d="M0 2h7l1 2h13v13H0z" fill="#f3d27c"/><path d="M1 6h19v11H1z" fill="#fbe6a2"/><path d="M4 17v-7h13v7h-3v-3H8v3z" fill="#45a6cf"/></svg></span><span class="h-[3px] w-[38px] bg-[#76a9dc]"></span></button>
  <button aria-label="Internet Explorer" class="w-[46px] flex flex-col items-center"><span class="flex-1 flex items-center"><svg width="21" height="20" viewBox="0 0 21 20" fill="none"><path d="M4 11h14Q17 4 11 4T4 11t7 7q4 0 6-4" stroke="#70c5ee" stroke-width="3.500"/><path d="M2 18Q-2 15 5 8T19 1q2 1 0 5" stroke="#f0cf48" stroke-width="1.700"/></svg></span><span class="h-[3px]"></span></button>
  <button aria-label="Firefox" class="w-[46px] flex flex-col items-center"><span class="flex-1 flex items-center"><svg width="21" height="20" viewBox="0 0 21 20"><circle cx="10.500" cy="10" r="9" fill="#2d6aa8"/><path d="M8 2q5-2 9 1-3 1-6 0z" fill="#6db9de"/><path d="M2 3q1 2 4 2l3 3-2 2q2 4 7 2 5-2 4-8 4 6 1 11T9 19.500 0 11Q0 6 2 3z" fill="#e66b2c"/><path d="M17 4q4 7-1 12-3 2-7 2 7-1 8-7z" fill="#f7b53c"/></svg></span><span class="h-[3px] w-[38px] bg-[#76a9dc]"></span></button>
  <button aria-label="Chrome" class="w-[46px] flex flex-col items-center"><span class="flex-1 flex items-center"><svg width="21" height="20" viewBox="0 0 21 20"><circle cx="10.500" cy="10" r="9.800" fill="#e04a3a"/><path d="M2 5l5.500 8L10 19.800A9.800 9.800 0 0 1 2 5z" fill="#3ea757"/><path d="M11 6h8.500Q22 11 18 16t-8 3.800L15 12z" fill="#fbd24b"/><circle cx="10.500" cy="10" r="4.800" fill="#fff"/><circle cx="10.500" cy="10" r="3.700" fill="#4a86e0"/></svg></span><span class="h-[3px] w-[38px] flex bg-[#76a9dc]"><i class="ml-auto w-[8px] bg-[#55708f]"></i></span></button>
  <button aria-label="Outlook" class="w-[46px] flex flex-col items-center"><span class="flex-1 flex items-center pt-[5px]"><svg width="25" height="24" viewBox="0 0 25 24"><path d="M12 3h9v12h-9z" fill="#e8f2fb" stroke="#2a7ac5"/><path d="M14 8l3 3 4-6" fill="none" stroke="#1a6fc0" stroke-width="1.500"/><path d="M0 2l13-2v18L0 16z" fill="#1466b3"/><ellipse cx="6.500" cy="9" rx="3" ry="3.800" fill="none" stroke="#fff" stroke-width="1.700"/><path d="M10 13h15v11H10z" fill="#eeb777"/><path d="M10 13l7.500 6 7.500-6" fill="none" stroke="#fff3df" stroke-width="1.300"/></svg></span><span class="h-[3px] w-[38px] bg-[#76a9dc]"></span></button>
  <button aria-label="Skype for Business" class="w-[46px] flex flex-col items-center"><span class="flex-1 flex items-center"><svg width="21" height="21" viewBox="0 0 21 21"><circle cx="7" cy="7" r="7" fill="#d6f0fb"/><circle cx="14" cy="14" r="7" fill="#d6f0fb"/><circle cx="10.500" cy="10.500" r="8.500" fill="#2db2e6"/><path d="M14.500 7.500Q13 5 10 5.500T7 8q0 2 3.500 2.500T14 13q0 3-3.500 3t-4.500-3" fill="none" stroke="#fff" stroke-width="2.200"/></svg></span><span class="h-[3px]"></span></button>
  <button aria-label="Skype" class="w-[46px] flex flex-col items-center"><span class="flex-1 flex items-center"><svg width="21" height="21" viewBox="0 0 21 21"><g fill="#1c9fdc"><circle cx="6.500" cy="6.500" r="6"/><circle cx="14.500" cy="14.500" r="6"/><circle cx="10.500" cy="10.500" r="9"/></g><path d="M14.500 7.500Q13 5 10 5.500T7 8q0 2 3.500 2.500T14 13q0 3-3.500 3t-4.500-3" fill="none" stroke="#fff" stroke-width="2.200"/></svg></span><span class="h-[3px] w-[38px] bg-[#76a9dc]"></span></button>
  <button aria-label="Excel" class="w-[46px] flex flex-col items-center"><span class="flex-1 flex items-center"><svg width="21" height="19" viewBox="0 0 21 19"><path d="M11 2h9.500v15H11z" fill="#fff" stroke="#1f7246"/><path d="M12 5h8M12 8h8M12 11h8M12 14h8M16.500 3v13" stroke="#1f7246"/><path d="M0 2l13-2v19L0 17z" fill="#1f7246"/><path d="M4 6l5 7M9 6l-5 7" stroke="#fff" stroke-width="1.800"/></svg></span><span class="h-[3px] w-[38px] flex bg-[#76a9dc]"><i class="ml-auto w-[8px] bg-[#55708f]"></i></span></button>
  <button aria-label="Notepad" class="w-[46px] flex flex-col items-center"><span class="flex-1 flex items-center"><svg width="21" height="20" viewBox="0 0 21 20"><path d="M7 2l13 1-4 16-14-3z" fill="#8fc9d6"/><path d="M7 2l13 1-1 4L5 8z" fill="#d5edf0"/><path d="M16 19l4-16 1 13z" fill="#4f7f8d"/><path d="M2 16l8-3 7 4-1 2z" fill="#c7dce0"/></svg></span><span class="h-[3px] w-[38px] flex bg-[#76a9dc]"><i class="ml-auto w-[8px] bg-[#55708f]"></i></span></button>
  <button aria-label="Acrobat Reader" class="w-[46px] flex flex-col items-center"><span class="flex-1 flex items-center"><svg width="20" height="20" viewBox="0 0 20 20"><rect x="1" y="1" width="18" height="18" fill="#2a0a0c" stroke="#b3191d" stroke-width="2"/><path d="M4 15q7-4 5.500-10.500Q9 3 8.500 5q1 6 8 8 1 0-1-1.200-5-.8-11 2" fill="none" stroke="#f0e8e8" stroke-width="1.200"/></svg></span><span class="h-[3px] w-[38px] bg-[#76a9dc]"></span></button>
  <button aria-label="GoToMeeting" class="w-[46px] flex flex-col items-center"><span class="flex-1 flex items-center"><svg width="20" height="20" viewBox="0 0 20 20"><path d="M10 3v14M3 10h14M5 5l10 10M15 5L5 15" stroke="#f3ae30" stroke-width="3"/><g fill="#f5b437"><circle cx="10" cy="2.500" r="2.500"/><circle cx="10" cy="17.500" r="2.500"/><circle cx="2.500" cy="10" r="2.500"/><circle cx="17.500" cy="10" r="2.500"/><circle cx="4.700" cy="4.700" r="2.300"/><circle cx="15.300" cy="4.700" r="2.300"/><circle cx="4.700" cy="15.300" r="2.300"/><circle cx="15.300" cy="15.300" r="2.300"/></g><circle cx="10" cy="10" r="2" fill="#8b5a18"/></svg></span><span class="h-[3px] w-[38px] bg-[#76a9dc]"></span></button>
  <button aria-label="Java" class="w-[46px] flex flex-col items-center bg-[#b0622a]"><span class="flex-1 flex items-center"><svg width="22" height="22" viewBox="0 0 22 22"><rect width="22" height="22" rx="3" fill="#eeeae6"/><path d="M12 2q2 2-1 4t0 5M15 5q-4 2-2 5" fill="none" stroke="#e0692e" stroke-width="1.400"/><path d="M6 12h10v2q0 3-3 3H9q-3 0-3-3zM16 12q3 0 0 3M5 19q6 2 12 0" fill="none" stroke="#5382a1" stroke-width="1.300"/></svg></span><span class="h-[3px] w-full bg-[#ee7d22]"></span></button>
  <button aria-label="PowerPoint" class="w-[46px] flex flex-col items-center bg-[#55555a]"><span class="flex-1 flex items-center"><svg width="21" height="19" viewBox="0 0 21 19"><path d="M11 2h9.500v15H11z" fill="#fff" stroke="#d24726"/><circle cx="16" cy="7" r="2.500" fill="#d24726"/><path d="M13 11.500h6M13 14h6" stroke="#d24726"/><path d="M0 2l13-2v19L0 17z" fill="#d9432b"/><path d="M5 14V5.500h2q3 0 3 2.300T7 10H5" fill="none" stroke="#fff" stroke-width="1.800"/></svg></span><span class="h-[3px] w-full bg-[#76a9dc]"></span></button>
  <div class="ml-auto flex items-center pr-[22px]">
    <button aria-label="Show hidden icons" class="w-[23px] mr-[3px] flex justify-center"><svg width="11" height="7" viewBox="0 0 11 7"><path d="M.5 6l5-5 5 5" fill="none" stroke="#eee" stroke-width="1.300"/></svg></button>
    <svg class="mx-[4px]" width="15" height="15" viewBox="0 0 15 15" role="img" aria-label="Remote tool"><rect width="15" height="15" rx="1" fill="#7fb3e5"/><path d="M2 2h4v4H2zM9 9h4v4H9z" fill="#a33"/><path d="M9 2h4v4H9zM2 9h4v4H2z" fill="#d66"/><path d="M6 4h4M4 6v4M11 6v4M6 11h4" stroke="#fff" stroke-width="1.500"/></svg>
    <svg class="mx-[4px]" width="14" height="14" viewBox="0 0 14 14" role="img" aria-label="Network client"><circle cx="7" cy="7" r="6.500" fill="#dfe9ee"/><path d="M2 4q4-4 9-1l-3 5q-3-3-6-4z" fill="#3d9bc9"/><path d="M8 6q4 1 5 4l-4 3z" fill="#3aa25a"/></svg>
    <svg class="mx-[4px]" width="16" height="12" viewBox="0 0 16 12" fill="none" stroke="#eee" role="img" aria-label="Battery"><path d="M5 2.500h9v7H5M14.500 4.500h1v3h-1M1 .5v3h4v-3M3 3.500V8q0 3 4 3"/><path d="M7 4.500h2v3H7z" fill="#eee"/></svg>
    <svg class="mx-[4px]" width="14" height="13" viewBox="0 0 14 13" fill="none" stroke="#bbb" stroke-width="1.300" role="img" aria-label="Wi-Fi"><path d="M1 12Q1 2 13 1M4 12Q4 5 13 4.500M7 12q0-4 6-4.500"/><path d="M10 12q0-2 3-2v2z" fill="#eee"/></svg>
    <svg class="mx-[4px]" width="15" height="13" viewBox="0 0 15 13" fill="none" stroke="#eee" stroke-width="1.100" role="img" aria-label="Volume"><path d="M1 4.500h2.500L7 1v11L3.500 8.500H1zM9 4.500q1.500 2 0 4M11 2.500q3 4 0 8M13 1q3.500 5.500 0 11"/></svg>
    <time class="ml-[5px] w-[56px] text-center text-[11px] leading-[16px] whitespace-nowrap">10:32 AM<br>1/25/2017</time>
    <button aria-label="Action center" class="ml-[12px]"><svg width="17" height="16" viewBox="0 0 17 16" fill="none" stroke="#eee" stroke-width="1.200"><path d="M1 1h15v10.500h-4L8.500 15v-3.500H1z"/></svg></button>
  </div>
</nav>
</body>
</html>
